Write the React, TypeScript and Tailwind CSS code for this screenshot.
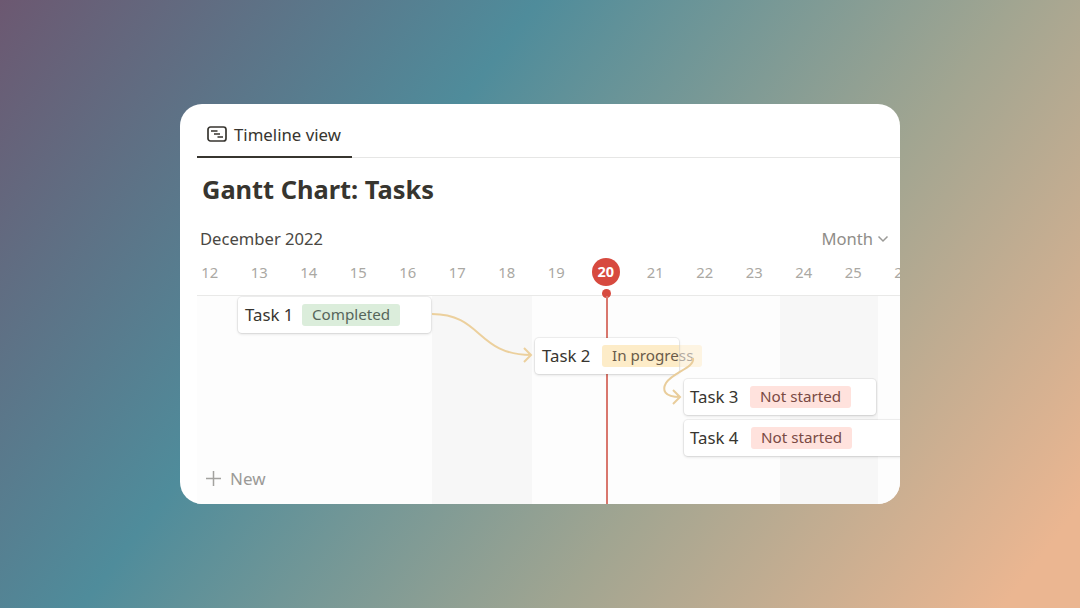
const days = ["12","13","14","15","16","17","18","19","20","21","22","23","24","25","26"];

function Tag({ label, cls }: { label: string; cls: string }) {
  return <span className={`h-[22px] px-[10px] rounded-[3px] flex items-center text-[15.2px] leading-none whitespace-nowrap shrink-0 ${cls}`}>{label}</span>;
}

function Bar({ name, nameCls, children, cls }: { name: string; nameCls: string; children: React.ReactNode; cls: string }) {
  return (
    <div className={`absolute h-[36px] bg-white rounded-[4px] shadow-[0_0_0_1px_rgba(15,15,15,0.05),0_1px_3px_rgba(15,15,15,0.14)] flex items-center overflow-hidden ${cls}`}>
      <span className={`text-[16.8px] leading-none text-[#37352f] whitespace-nowrap shrink-0 ${nameCls}`}>{name}</span>
      {children}
    </div>
  );
}

export default function App() {
  return (
    <div className="w-[1080px] h-[608px] flex items-center justify-center overflow-hidden bg-[linear-gradient(127deg,#6c5871_0%,#4f8c9b_35%,#a1a591_66%,#ebb691_95%,#ebb691_100%)] font-['Noto_Sans','Open_Sans',sans-serif]">
      <div className="w-[720px] h-[400px] bg-white rounded-[22px] overflow-hidden flex flex-col">
        <div className="h-[54px] ml-[17px] border-b border-[#e6e6e5] flex shrink-0">
          <div className="w-[155px] h-[54px] border-b-2 border-[#37352f] flex items-center gap-[7px] pl-[10px] pt-[12px] pb-[2px]">
            <svg width="20" height="16" viewBox="0 0 20 16" fill="none" className="shrink-0 -translate-y-[1px]">
              <rect x="1" y="1" width="18" height="14" rx="2.5" stroke="#37352f" strokeWidth="1.7" />
              <path d="M4 5h6.5M7 8h6M10.5 11h5.5" stroke="#37352f" strokeWidth="1.5" />
            </svg>
            <span className="text-[16.8px] leading-none text-[#37352f] whitespace-nowrap">Timeline view</span>
          </div>
        </div>
        <h1 className="ml-[22px] mt-[12px] h-[38px] text-[25.4px] leading-[38px] font-bold text-[#37352f] whitespace-nowrap shrink-0">Gantt Chart: Tasks</h1>
        <div className="flex items-center justify-between ml-[20px] mr-[11px] mt-[19px] h-[24px] shrink-0">
          <span className="text-[16.6px] leading-none text-[#4a4843] whitespace-nowrap">December 2022</span>
          <span className="flex items-center gap-[4px] text-[16.6px] leading-none text-[#8f8d89]">
            Month
            <svg width="12" height="8" viewBox="0 0 12 8" fill="none"><path d="M1.5 1.5 6 6l4.5-4.5" stroke="#9b9a97" strokeWidth="1.5" /></svg>
          </span>
        </div>
        <div className="ml-[17px] mt-[1px] h-[44px] border-b border-[#e9e9e8] flex shrink-0">
          {days.map((d) => (
            <div key={d} className="w-[49.5px] shrink-0 h-[28px] mt-[6px] flex items-center justify-center -translate-x-[12px]">
              {d === "20" ? (
                <span className="w-[28px] h-[28px] rounded-full bg-[#d74a3f] text-white text-[14.5px] font-bold flex items-center justify-center">20</span>
              ) : (
                <span className="text-[14.8px] leading-none text-[#aaa8a3]">{d}</span>
              )}
            </div>
          ))}
        </div>
        <div className="relative ml-[17px] flex-1 bg-[#fdfdfd]">
          <div className="absolute left-[235px] top-0 bottom-0 w-[100px] bg-[#f7f7f7]" />
          <div className="absolute left-[583px] top-0 bottom-0 w-[98px] bg-[#f7f7f7]" />
          <div className="absolute left-[405px] -top-[7px] w-[9px] h-[9px] rounded-full bg-[#d74a3f]" />
          <div className="absolute left-[409px] top-0 bottom-0 w-[2px] bg-[#d9776d]" />

          <Bar name="Task 1" nameCls="w-[64px] pl-[7px]" cls="left-[41px] top-[1px] w-[193px]">
            <Tag label="Completed" cls="bg-[#dbeddb] text-[#56655a]" />
          </Bar>

          <span className="absolute left-[405px] top-[49px] h-[22px] w-[100px] pl-[10px] flex items-center bg-[#fdecc8] rounded-[3px] opacity-50 text-[15.2px] leading-none text-[#6a5b4a] whitespace-nowrap">In progress</span>
          <Bar name="Task 2" nameCls="w-[67px] pl-[7px]" cls="left-[338px] top-[42px] w-[144px]">
            <Tag label="In progress" cls="bg-[#fdecc8] text-[#6a5b4a]" />
          </Bar>

          <Bar name="Task 3" nameCls="w-[66px] pl-[6px]" cls="left-[487px] top-[83px] w-[192px]">
            <Tag label="Not started" cls="bg-[#ffe2dd] text-[#7a4a44]" />
          </Bar>
          <Bar name="Task 4" nameCls="w-[67px] pl-[6px]" cls="left-[487px] top-[124px] w-[240px]">
            <Tag label="Not started" cls="bg-[#ffe2dd] text-[#7a4a44]" />
          </Bar>

          <svg className="absolute left-0 top-0" width="703" height="208" fill="none">
            <path d="M235 18C285 18 280 59 334 59M327 52l7 7-7 7" stroke="#ecd09d" strokeWidth="2" />
            <path d="M496 62C498 72 476 76 469 87C465 94 467 101 483 101M476 94l7 7-7 7" stroke="#e9cd9b" strokeWidth="2" />
          </svg>

          <div className="absolute left-[9px] top-[174px] flex items-center gap-[9px] text-[17px] leading-none text-[#9b9a97]">
            <svg width="15" height="15" viewBox="0 0 15 15" fill="none"><path d="M7.5 0v15M0 7.5h15" stroke="#a3a29f" strokeWidth="1.5" /></svg>
            New
          </div>
        </div>
      </div>
    </div>
  );
}
